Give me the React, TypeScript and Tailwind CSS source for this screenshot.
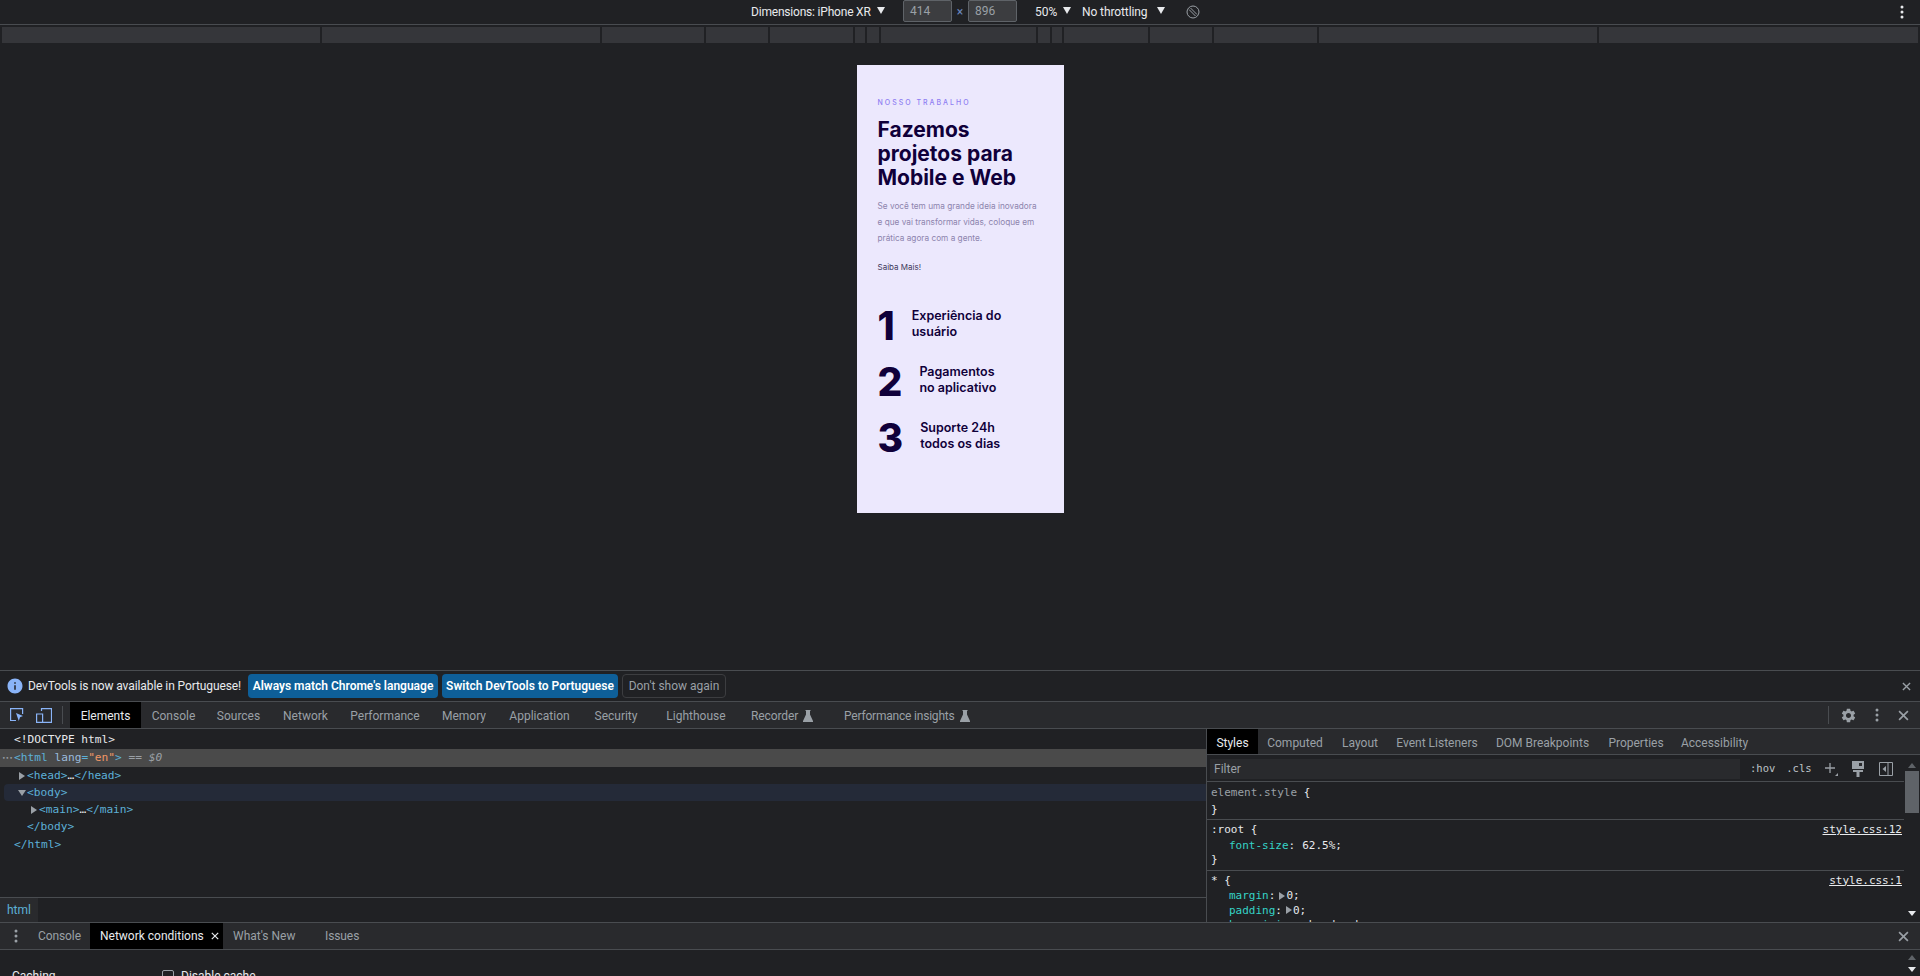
import { MdInfo, MdSettings } from "react-icons/md";

const ui = "font-['Roboto','Liberation_Sans',sans-serif]";
const mono = "font-['DejaVu_Sans_Mono',monospace]";

const mediaSegments = [318, 278, 102, 62, 83, 10, 12, 155, 12, 10, 84, 62, 103, 278, 319];

const mainTabs = [
  { label: "Elements", w: "w-[71px]", active: true },
  { label: "Console", w: "w-[65px]" },
  { label: "Sources", w: "w-[65px]" },
  { label: "Network", w: "w-[69px]" },
  { label: "Performance", w: "w-[90px]" },
  { label: "Memory", w: "w-[68px]" },
  { label: "Application", w: "w-[83px]" },
  { label: "Security", w: "w-[70px]" },
  { label: "Lighthouse", w: "w-[90px]" },
];

const sideTabs = [
  { label: "Styles", w: "w-[51px]", active: true },
  { label: "Computed", w: "w-[74px]" },
  { label: "Layout", w: "w-[56px]" },
  { label: "Event Listeners", w: "w-[98px]" },
  { label: "DOM Breakpoints", w: "w-[113px]" },
  { label: "Properties", w: "w-[74px]" },
  { label: "Accessibility", w: "w-[83px]" },
];

const features = [
  { n: "1", a: "Experiência do", b: "usuário" },
  { n: "2", a: "Pagamentos", b: "no aplicativo" },
  { n: "3", a: "Suporte 24h", b: "todos os dias" },
];

function Caret({ className = "" }: { className?: string }) {
  return (
    <svg width="8" height="8" viewBox="0 0 8 8" className={`shrink-0 mb-1 ${className}`}>
      <path d="M0 1h8L4 8z" fill="#e8eaed" />
    </svg>
  );
}

function Kebab({ color = "#9aa0a6" }: { color?: string }) {
  return (
    <svg width="4" height="14" viewBox="0 0 4 14" fill={color}>
      <circle cx="2" cy="2" r="1.5" />
      <circle cx="2" cy="7" r="1.5" />
      <circle cx="2" cy="12" r="1.5" />
    </svg>
  );
}

function Close({ size = 11, color = "#9aa0a6", width = 1.5 }: { size?: number; color?: string; width?: number }) {
  return (
    <svg width={size} height={size} viewBox="0 0 10 10" stroke={color} strokeWidth={width} fill="none">
      <path d="M1 1l8 8M9 1l-8 8" />
    </svg>
  );
}

function Flask() {
  return (
    <svg width="10" height="12" viewBox="0 0 10 12" fill="#9aa0a6" className="ml-[5px]">
      <path d="M2.5 0h5v1H7v3.5L10 11v1H0v-1l3-6.500V1h-.5z" />
    </svg>
  );
}

function Tri({ open }: { open?: boolean }) {
  return (
    <svg width="8" height="8" viewBox="0 0 8 8" fill="#9aa0a6" className="shrink-0">
      {open ? <path d="M0 1h8L4 7z" /> : <path d="M1 0l6 4-6 4z" />}
    </svg>
  );
}

function Bracket({ children }: { children: React.ReactNode }) {
  return <span className="text-[#5db0d7]">{children}</span>;
}

function Ellipsis() {
  return <span className="text-[#e8eaed]">…</span>;
}

function DomTree() {
  return (
    <div className={`${mono} flex-1 text-[11.200px] leading-[17.300px] pt-[2px] text-[#e8eaed]`}>
      <div className="pl-[14px] h-[17.300px]">{"<!DOCTYPE html>"}</div>
      <div className="flex pl-[2px] h-[18px] bg-[#4a4a4a] mt-[1px]">
        <span className="w-[12px] text-[#9aa0a6] text-[6px]">•••</span>
        <span>
          <Bracket>{"<html "}</Bracket>
          <span className="text-[#9bbbdc]">lang</span>
          <Bracket>=</Bracket>
          <span className="text-[#f29766]">"en"</span>
          <Bracket>{">"}</Bracket>
          <span className="text-[#9aa0a6]">{" == "}</span>
          <span className="text-[#9aa0a6] italic">$0</span>
        </span>
      </div>
      <div className="flex items-center pl-[18px] h-[17px]">
        <Tri />
        <span className="ml-[1px]">
          <Bracket>{"<head>"}</Bracket>
          <Ellipsis />
          <Bracket>{"</head>"}</Bracket>
        </span>
      </div>
      <div className="flex items-center ml-[4px] pl-[14px] h-[17px] bg-[#242a38] rounded-l-sm">
        <Tri open />
        <span className="ml-[1px]">
          <Bracket>{"<body>"}</Bracket>
        </span>
      </div>
      <div className="flex items-center pl-[30px] h-[17px]">
        <Tri />
        <span className="ml-[1px]">
          <Bracket>{"<main>"}</Bracket>
          <Ellipsis />
          <Bracket>{"</main>"}</Bracket>
        </span>
      </div>
      <div className="pl-[27px] h-[17.300px]">
        <Bracket>{"</body>"}</Bracket>
      </div>
      <div className="pl-[14px] h-[17.300px]">
        <Bracket>{"</html>"}</Bracket>
      </div>
    </div>
  );
}

function Rule({ selector, source, children }: { selector: string; source: string; children?: React.ReactNode }) {
  return (
    <div className="border-b border-[#494c50] pl-[4px] pr-[5px] pt-[2px] pb-[3px] leading-[15px]">
      <div className="flex justify-between">
        <span className="text-[#e8eaed]">
          {selector} {"{"}
        </span>
        <span className="underline text-[#e8eaed]">{source}</span>
      </div>
      {children}
    </div>
  );
}

function Prop({ name, value, arrow }: { name: string; value: string; arrow?: boolean }) {
  return (
    <div className="flex items-center pl-[18px] pt-[2px] h-[14.500px]">
      <span className="text-[#35d4c7]">{name}</span>
      <span className="text-[#e8eaed]">:</span>
      {arrow ? (
        <svg width="6" height="8" viewBox="0 0 6 8" fill="#9aa0a6" className="ml-[4px] mr-[1px]">
          <path d="M0 0l6 4-6 4z" />
        </svg>
      ) : (
        <span className="w-[7px]" />
      )}
      <span className="text-[#e8eaed]">{value};</span>
    </div>
  );
}

function StylesPane() {
  return (
    <div className="relative flex flex-col w-[714px] border-l border-[#494c50] overflow-hidden">
      <div className="flex h-[26px] shrink-0 bg-[#292a2d] border-b border-[#494c50] text-[12px]">
        {sideTabs.map((t) => (
          <div
            key={t.label}
            className={`${t.w} flex items-center justify-center pt-[2px] whitespace-nowrap ${t.active ? "bg-black text-[#e8eaed]" : "text-[#9aa0a6]"}`}
          >
            {t.label}
          </div>
        ))}
      </div>
      <div className="flex items-center h-[27px] shrink-0 border-b border-[#494c50] pl-[3px] pr-[18px] pt-[2px]">
        <div className="w-[530px] h-[20px] bg-[#292a2d] flex items-center pl-[4px] text-[12px] text-[#9aa0a6]">Filter</div>
        <div className={`${mono} flex items-center text-[10.500px] text-[#bdc1c6] ml-[10px]`}>
          <span>:hov</span>
          <span className="ml-[11px]">.cls</span>
        </div>
        <svg width="14" height="14" viewBox="0 0 14 14" className="ml-[12px]" stroke="#9aa0a6" strokeWidth="1.300" fill="none">
          <path d="M6 1v10M1 6h10" />
          <path d="M14 11v3h-3z" fill="#9aa0a6" stroke="none" />
        </svg>
        <svg width="12" height="16" viewBox="0 0 12 16" className="ml-[14px]" fill="#9aa0a6">
          <path d="M0 0h12v8H0z" />
          <path d="M1 9h10v2H7.500v5h-3v-5H1z" />
          <path d="M7 2h3v3H7z" fill="#292a2d" />
        </svg>
        <svg width="14" height="14" viewBox="0 0 14 14" className="ml-[15px]" fill="none" stroke="#9aa0a6">
          <path d="M.5.5h13v13H.5zM9 .5v13" />
          <path d="M7 4v6L3.500 7z" fill="#9aa0a6" stroke="none" />
        </svg>
      </div>
      <div className={`${mono} text-[11px] flex-1 pr-[13px] overflow-hidden`}>
        <div className="border-b border-[#494c50] pl-[4px] pt-[2px] pb-[1px] leading-[17px] text-[#e8eaed]">
          <div>
            <span className="text-[#9aa0a6]">element.style</span> {"{"}
          </div>
          <div>{"}"}</div>
        </div>
        <Rule selector=":root" source="style.css:12">
          <Prop name="font-size" value="62.5%" />
          <div className="text-[#e8eaed]">{"}"}</div>
        </Rule>
        <Rule selector="*" source="style.css:1">
          <Prop name="margin" value="0" arrow />
          <Prop name="padding" value="0" arrow />
          <Prop name="box-sizing" value="border-box" />
        </Rule>
      </div>
      <div className="absolute right-0 top-[26px] bottom-0 w-[16px] bg-[#202124] flex flex-col items-center pt-[8px]">
        <svg width="8" height="5" viewBox="0 0 8 5" fill="#5f6368">
          <path d="M4 0l4 5H0z" />
        </svg>
        <div className="w-[14px] h-[42px] bg-[#5f6368] mt-[3px]" />
        <svg width="8" height="5" viewBox="0 0 8 5" fill="#e8eaed" className="mt-auto mb-[6px]">
          <path d="M0 0h8L4 5z" />
        </svg>
      </div>
    </div>
  );
}

export default function App() {
  return (
    <div className={`${ui} flex flex-col w-[1920px] h-[976px] overflow-hidden bg-[#202124] text-[12px] text-[#9aa0a6]`}>
      {/* Device toolbar */}
      <div className="flex items-center h-[25px] shrink-0 border-b border-[#494c50] pl-[751px] pr-[16px] text-[#e8eaed] whitespace-nowrap">
        <span className="w-[122px] tracking-[-0.200px]">Dimensions: iPhone XR</span>
        <Caret className="ml-[4px]" />
        <div className="flex items-center w-[49px] h-[22px] ml-[18px] -mt-[2px] pl-[6px] bg-[#3c3d40] border border-[#5f6368] rounded-[2px] text-[#9aa0a6]">414</div>
        <span className="w-[16px] text-center text-[#8ab4f8] opacity-70">×</span>
        <div className="flex items-center w-[49px] h-[22px] -mt-[2px] pl-[6px] bg-[#3c3d40] border border-[#5f6368] rounded-[2px] text-[#9aa0a6]">896</div>
        <span className="ml-[18px] w-[26px]">50%</span>
        <Caret className="ml-[2px]" />
        <span className="ml-[11px] w-[70px] tracking-[-0.100px]">No throttling</span>
        <Caret className="ml-[5px]" />
        <svg width="14" height="14" viewBox="0 0 14 14" fill="none" stroke="#9aa0a6" className="ml-[21px]">
          <circle cx="7" cy="7" r="6" />
          <path d="M3 4.500L9.500 11M4.500 3L11 9.500" />
        </svg>
        <div className="ml-auto">
          <Kebab color="#e8eaed" />
        </div>
      </div>

      {/* Media query bars */}
      <div className="flex gap-[2px] h-[16px] mt-[2px] pl-[2px] shrink-0">
        {mediaSegments.map((w, i) => (
          <div key={i} className="h-full bg-[#35363a] shrink-0" style={{ width: w }} />
        ))}
      </div>

      {/* Viewport */}
      <div className="flex justify-center h-[627px] pt-[22px] shrink-0">
        <main className="w-[207px] h-[448px] bg-[#ece8fd] pl-[21px] font-['Inter',sans-serif]">
          <p className="mt-[33px] text-[7px] leading-[9px] font-medium tracking-[2px] text-[#8f7ef2]">NOSSO TRABALHO</p>
          <h1 className="mt-[11px] text-[21px] leading-[24px] font-bold text-[#10003a]">
            Fazemos
            <br />
            projetos para
            <br />
            Mobile e Web
          </h1>
          <p className="mt-[8px] text-[8.250px] leading-[16px] text-[#8c84ad] whitespace-nowrap">
            Se você tem uma grande ideia inovadora
            <br />e que vai transformar vidas, coloque em
            <br />
            prática agora com a gente.
          </p>
          <p className="mt-[16px] text-[8px] leading-[10px] text-[#3f3a5c]">Saiba Mais!</p>
          <ul className="mt-[34px] flex flex-col gap-[20px]">
            {features.map((f) => (
              <li key={f.n} className="flex items-center gap-[17px]">
                <span className="pt-[4px] text-[39px] leading-[32px] font-extrabold text-[#10003a]">{f.n}</span>
                <span className="text-[12.500px] leading-[16px] font-semibold text-[#10003a]">
                  {f.a}
                  <br />
                  {f.b}
                </span>
              </li>
            ))}
          </ul>
        </main>
      </div>

      {/* Language infobar */}
      <div className="flex items-center h-[32px] shrink-0 border-y border-[#494c50] pl-[7px] pr-[9px] text-[#e8eaed] whitespace-nowrap">
        <MdInfo size={18} color="#8ab4f8" className="-ml-[1px]" />
        <span className="ml-[4px] w-[213px] tracking-[-0.100px]">DevTools is now available in Portuguese!</span>
        <button className="ml-[7px] w-[190px] h-[24px] rounded-[4px] bg-[#0e5f99] font-semibold text-white">Always match Chrome's language</button>
        <button className="ml-[4px] w-[176px] h-[24px] rounded-[4px] bg-[#0e5f99] font-semibold text-white">Switch DevTools to Portuguese</button>
        <button className="ml-[4px] w-[104px] h-[24px] rounded-[4px] border border-[#3c3d40] text-[#9aa0a6]">Don't show again</button>
        <div className="ml-auto">
          <Close size={9} />
        </div>
      </div>

      {/* Main tab strip */}
      <div className="flex items-center h-[27px] shrink-0 bg-[#292a2d] border-b border-[#494c50] pl-[10px] pr-[11px] whitespace-nowrap">
        <svg width="14" height="14" viewBox="0 0 14 14" fill="none" stroke="#8ab4f8" strokeWidth="1.200">
          <path d="M6 12.500H.6V.6h12V6" />
          <path d="M6 5l7 3-3 1.200L8.800 13z" fill="#8ab4f8" stroke="none" />
        </svg>
        <svg width="16" height="15" viewBox="0 0 16 15" fill="none" stroke="#8ab4f8" strokeWidth="1.200" className="ml-[12px]">
          <path d="M5.500 3V.6h10v13.800h-10M.6 6h6v8.400h-6z" />
        </svg>
        <div className="w-px h-[18px] bg-[#494c50] ml-[10px] mr-[7px]" />
        {mainTabs.map((t) => (
          <div
            key={t.label}
            className={`${t.w} h-full flex items-center justify-center pt-[2px] ${t.active ? "bg-black text-[#e8eaed]" : ""}`}
          >
            {t.label}
          </div>
        ))}
        <div className="ml-[10px] pt-[2px] flex items-center w-[93px] tracking-[-0.100px]">
          Recorder
          <Flask />
        </div>
        <div className="pt-[2px] flex items-center tracking-[-0.200px]">
          Performance insights
          <Flask />
        </div>
        <div className="ml-auto flex items-center">
          <div className="w-px h-[18px] bg-[#494c50] mr-[11px]" />
          <MdSettings size={17} color="#9aa0a6" />
          <div className="ml-[18px]">
            <Kebab />
          </div>
          <div className="ml-[19px]">
            <Close />
          </div>
        </div>
      </div>

      {/* Elements + sidebar */}
      <div className="flex h-[193px] shrink-0">
        <div className="flex flex-col flex-1 min-w-0">
          <DomTree />
          <div className="flex h-[25px] border-t border-[#494c50] shrink-0">
            <div className="flex items-center px-[7px] bg-[#292a2d] text-[#5db0d7]">html</div>
          </div>
        </div>
        <StylesPane />
      </div>

      {/* Drawer tabs */}
      <div className="flex items-center h-[28px] shrink-0 bg-[#292a2d] border-y border-[#494c50] pl-[14px] pr-[11px] whitespace-nowrap">
        <Kebab />
        <span className="ml-[20px] w-[52px] tracking-[-0.100px]">Console</span>
        <div className="flex items-center justify-between w-[133px] h-full bg-black pl-[10px] pr-[4px] text-[#e8eaed]">
          Network conditions
          <Close size={8} color="#e8eaed" />
        </div>
        <span className="ml-[10px] w-[92px]">What's New</span>
        <span className="tracking-[-0.100px]">Issues</span>
        <div className="ml-auto">
          <Close />
        </div>
      </div>

      {/* Network conditions */}
      <div className="relative flex-1 overflow-hidden pl-[12px] pt-[17px] text-[#e8eaed]">
        <div className="flex items-center">
          <span className="w-[150px]">Caching</span>
          <span className="w-[12px] h-[12px] rounded-[2px] border border-[#9aa0a6]" />
          <span className="ml-[7px]">Disable cache</span>
        </div>
        <div className="absolute right-0 top-0 bottom-0 w-[16px] flex flex-col items-center pt-[5px] gap-[7px]">
          <svg width="8" height="5" viewBox="0 0 8 5" fill="#5f6368">
            <path d="M4 0l4 5H0z" />
          </svg>
          <svg width="8" height="5" viewBox="0 0 8 5" fill="#e8eaed">
            <path d="M0 0h8L4 5z" />
          </svg>
        </div>
      </div>
    </div>
  );
}
